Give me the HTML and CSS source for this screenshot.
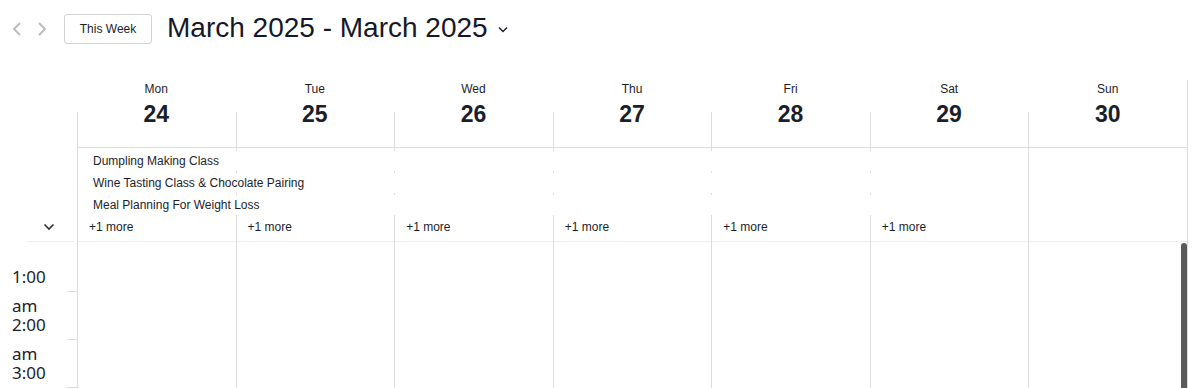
FILE: index.html
```html
<!DOCTYPE html>
<html lang="en">
<head>
<meta charset="utf-8">
<title>Week calendar</title>
<link rel="stylesheet" href="styles.css">
</head>
<body>
<div class="toolbar">
  <svg class="nav nav-prev" width="12" height="16" viewBox="0 0 12 16"><polyline points="9,2 3,8 9,14" fill="none" stroke="#bdbdbd" stroke-width="2"/></svg>
  <svg class="nav nav-next" width="12" height="16" viewBox="0 0 12 16"><polyline points="3,2 9,8 3,14" fill="none" stroke="#bdbdbd" stroke-width="2"/></svg>
  <button class="today-btn">This Week</button>
  <h1 class="title">March 2025 - March 2025</h1>
  <svg class="title-caret" width="10" height="7" viewBox="0 0 10 7"><polyline points="1,1.5 5,5.5 9,1.5" fill="none" stroke="#1b1e2b" stroke-width="1.4"/></svg>
</div>

<div class="cal">
  <div class="head">
    <div class="gutter"></div>
    <div class="hcell"><div class="dname">Mon</div><div class="dnum">24</div></div>
    <div class="hcell"><div class="dname">Tue</div><div class="dnum">25</div></div>
    <div class="hcell"><div class="dname">Wed</div><div class="dnum">26</div></div>
    <div class="hcell"><div class="dname">Thu</div><div class="dnum">27</div></div>
    <div class="hcell"><div class="dname">Fri</div><div class="dnum">28</div></div>
    <div class="hcell"><div class="dname">Sat</div><div class="dnum">29</div></div>
    <div class="hcell"><div class="dname">Sun</div><div class="dnum">30</div></div>
  </div>

  <div class="allday">
    <div class="ad-gutter-line"></div>
    <div class="ad-line"></div>
    <div class="ad-col c1"></div>
    <div class="ad-col c2"></div>
    <div class="ad-col c3"></div>
    <div class="ad-col c4"></div>
    <div class="ad-col c5"></div>
    <div class="ad-col c6"></div>
    <div class="ad-col c7"></div>
    <div class="event r1">Dumpling Making Class</div>
    <div class="event r2">Wine Tasting Class &amp; Chocolate Pairing</div>
    <div class="event r3">Meal Planning For Weight Loss</div>
    <div class="ad-toggle">
      <svg width="12" height="8" viewBox="0 0 12 8"><polyline points="1.5,1.5 6,6 10.5,1.5" fill="none" stroke="#333" stroke-width="1.6"/></svg>
    </div>
    <div class="more c1">+1 more</div>
    <div class="more c2">+1 more</div>
    <div class="more c3">+1 more</div>
    <div class="more c4">+1 more</div>
    <div class="more c5">+1 more</div>
    <div class="more c6">+1 more</div>
  </div>

  <div class="tgrid">
    <div class="tgutter">
      <div class="tlabel">1:00 am</div>
      <div class="tlabel">2:00 am</div>
      <div class="tlabel">3:00 am</div>
    </div>
    <div class="tcol"></div>
    <div class="tcol"></div>
    <div class="tcol"></div>
    <div class="tcol"></div>
    <div class="tcol"></div>
    <div class="tcol"></div>
    <div class="tcol"></div>
    <div class="thumb"></div>
  </div>
</div>
</body>
</html>
```

FILE: styles.css
```css
html, body {
  margin: 0;
  padding: 0;
  background: #fff;
  overflow: hidden;
}
body {
  font-family: "Liberation Sans", Arial, sans-serif;
  color: #1b1e2b;
  width: 1192px;
  height: 388px;
}

/* toolbar */
.toolbar {
  display: flex;
  align-items: center;
  height: 30px;
  padding: 14px 0 0 11px;
  margin-bottom: 36px;
}
.nav { display: block; flex: none; }
.nav-prev { margin-right: 13px; }
.nav-next { margin-right: 16px; }
.today-btn {
  flex: none;
  width: 88px;
  height: 30px;
  box-sizing: border-box;
  border: 1px solid #d3d3d3;
  border-radius: 3px;
  background: #fff;
  font-family: "Liberation Sans", Arial, sans-serif;
  font-size: 12px;
  color: #1b1e2b;
  padding: 0;
  margin-right: 15px;
}
.title {
  margin: 0;
  font-size: 28px;
  font-weight: normal;
  line-height: 30px;
  color: #151827;
  position: relative;
  top: -1px;
}
.title-caret { display: block; margin-left: 10px; margin-top: 1px; }

/* calendar */
.cal {
  width: 1188px;
  border-right: 1px solid #dddddd;
  box-sizing: border-box;
}
.head {
  display: grid;
  grid-template-columns: 77px repeat(7, 1fr);
  height: 68px;
}
.hcell {
  border-bottom: 1px solid #dddddd;
  text-align: center;
  padding-top: 2px;
  background: linear-gradient(#dddddd, #dddddd) no-repeat left 0 top 32px / 1px 100%;
}
.dname {
  font-size: 12px;
  line-height: 14px;
  color: #1b1e2b;
}
.dnum {
  font-size: 23px;
  font-weight: bold;
  line-height: 27px;
  margin-top: 5px;
  color: #1b1e2b;
}

/* all-day */
.allday {
  display: grid;
  grid-template-columns: 77px repeat(7, 1fr);
  grid-template-rows: 2px repeat(4, 22px) 3px 1px;
}
.ad-gutter-line {
  grid-column: 1;
  grid-row: 7;
  margin: 0 3px 0 27px;
  background: #eeeeee;
}
.ad-line {
  grid-column: 2 / 9;
  grid-row: 7;
  background: #eeeeee;
}
.ad-col {
  grid-row: 1 / -1;
  border-left: 1px solid #dddddd;
}
.c1 { grid-column: 2; }
.c2 { grid-column: 3; }
.c3 { grid-column: 4; }
.c4 { grid-column: 5; }
.c5 { grid-column: 6; }
.c6 { grid-column: 7; }
.c7 { grid-column: 8; }
.event {
  grid-column: 2 / 8;
  margin: 1px 0 1px 2px;
  background: #fff;
  font-size: 12px;
  line-height: 20px;
  padding-left: 14px;
  color: #1b1e2b;
  white-space: nowrap;
}
.r1 { grid-row: 2; }
.r2 { grid-row: 3; }
.r3 { grid-row: 4; }
.ad-toggle {
  grid-column: 1;
  grid-row: 5;
  display: flex;
  align-items: center;
  justify-content: flex-end;
  padding-right: 22px;
}
.ad-toggle svg { display: block; }
.more {
  grid-row: 5;
  font-size: 12px;
  line-height: 22px;
  padding-left: 12px;
  color: #1b1e2b;
  white-space: nowrap;
}

/* time grid */
.tgrid {
  position: relative;
  display: grid;
  grid-template-columns: 77px repeat(7, 1fr);
  height: 146px;
  overflow: hidden;
}
.tgutter {
  padding-top: 20px;
  background-image: repeating-linear-gradient(to bottom, transparent 0, transparent 47px, #dddddd 47px, #dddddd 48px);
  background-size: 10px 100%;
  background-position: right 0 top 2px;
  background-repeat: no-repeat;
}
.tlabel {
  height: 48px;
  width: 50px;
  padding-left: 12px;
  font-family: "Noto Sans", "Open Sans", sans-serif;
  font-size: 17px;
  line-height: 29px;
  color: #1b1e2b;
}
.tcol {
  border-left: 1px solid #dddddd;
}
.thumb {
  position: absolute;
  right: 0;
  top: 1px;
  width: 6px;
  height: 300px;
  background: #5a5a5a;
  border-radius: 3px 3px 0 0;
}
```
